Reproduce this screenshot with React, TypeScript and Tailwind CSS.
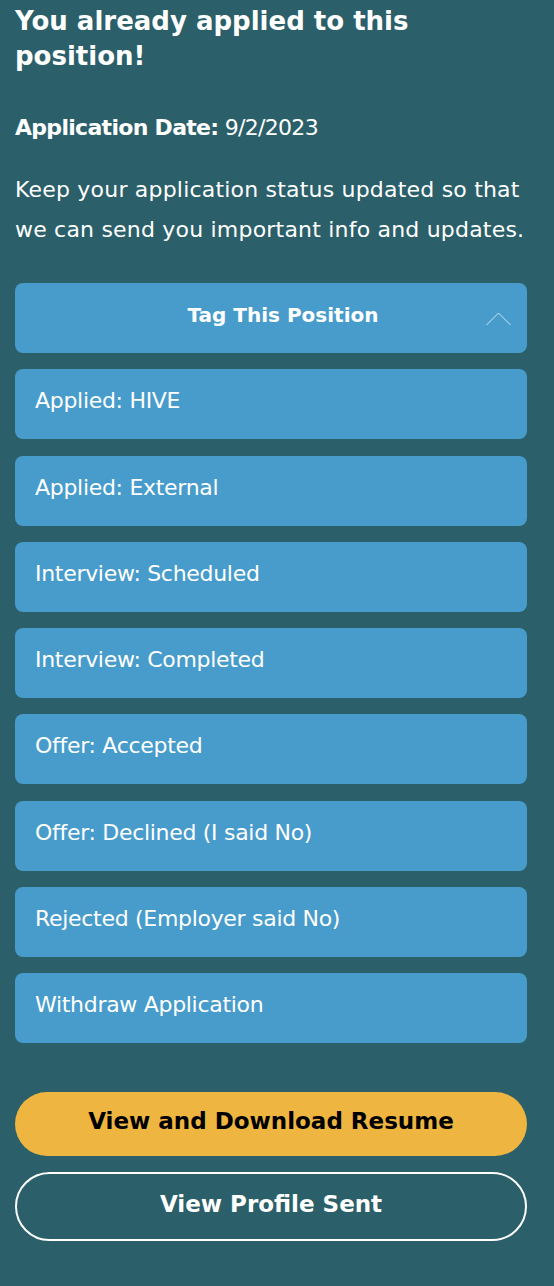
const tags = [
  "Applied: HIVE",
  "Applied: External",
  "Interview: Scheduled",
  "Interview: Completed",
  "Offer: Accepted",
  "Offer: Declined (I said No)",
  "Rejected (Employer said No)",
  "Withdraw Application",
];

const App = () => {
  return (
    <div
      className="min-h-[1286px] bg-[#2b5f6a] pl-[15px] pr-[27px] pt-[4px] pb-[44px] text-white"
      style={{ fontFamily: "'DejaVu Sans', 'Noto Sans', sans-serif" }}
    >
      <h1 className="text-[26px] font-bold leading-[35px]">You already applied to this position!</h1>
      <p className="mt-[34px] text-[22px] leading-[40px] tracking-[-0.7px]">
        <span className="font-bold">Application Date:</span> 9/2/2023
      </p>
      <p className="mt-[22px] text-[22px] leading-[40px] tracking-[0.2px]">
        Keep your application status updated so that we can send you important info and updates.
      </p>

      <div className="mt-[33px] flex flex-col gap-[16.3px]">
        <button className="relative flex h-[70px] items-center justify-center rounded-lg bg-[#479ccb] pb-[6px] pl-[24px]">
          <span className="text-[20px] font-bold leading-[30px]">Tag This Position</span>
          <svg
            className="absolute right-[16px] top-[29px]"
            width="25"
            height="14"
            viewBox="0 0 25 14"
            fill="none"
          >
            <path d="M0.5 13 L12.5 1 L24.5 13" stroke="rgba(255,255,255,0.75)" strokeWidth="1" />
          </svg>
        </button>
        {tags.map((t) => (
          <div
            key={t}
            className="flex h-[70px] items-center rounded-lg bg-[#479ccb] px-[20px] pb-[6px] text-[22px] leading-[30px] tracking-[-0.3px]"
          >
            {t}
          </div>
        ))}
      </div>

      <div className="mt-[49px] flex flex-col gap-[16px]">
        <button className="h-[64px] rounded-full bg-[#eeb540] pb-[6px] text-[23px] font-bold leading-[30px] text-black">
          View and Download Resume
        </button>
        <button className="h-[69px] rounded-full border-2 border-white pb-[6px] text-[23px] font-bold leading-[30px]">
          View Profile Sent
        </button>
      </div>
    </div>
  );
};

export default App;
